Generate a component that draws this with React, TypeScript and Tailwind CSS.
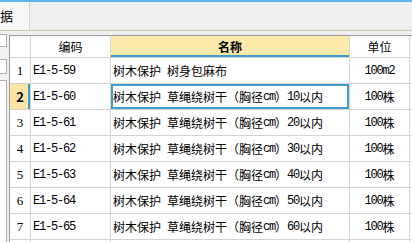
import React from "react";

const rows = [
  { no: 1, code: "E1-5-59", name: "树木保护 树身包麻布", unit: "100m2" },
  { no: 2, code: "E1-5-60", name: "树木保护 草绳绕树干（胸径cm）10以内", unit: "100株" },
  { no: 3, code: "E1-5-61", name: "树木保护 草绳绕树干（胸径cm）20以内", unit: "100株" },
  { no: 4, code: "E1-5-62", name: "树木保护 草绳绕树干（胸径cm）30以内", unit: "100株" },
  { no: 5, code: "E1-5-63", name: "树木保护 草绳绕树干（胸径cm）40以内", unit: "100株" },
  { no: 6, code: "E1-5-64", name: "树木保护 草绳绕树干（胸径cm）50以内", unit: "100株" },
  { no: 7, code: "E1-5-65", name: "树木保护 草绳绕树干（胸径cm）60以内", unit: "100株" },
];

// latin runs get a narrow mono face, like the old bitmap song font
const Mixed = ({ text }: { text: string }) => (
  <>
    {text
      .split(/([\x20-\x7e]+)/)
      .filter(Boolean)
      .map((part, i) =>
        /^[\x20-\x7e]+$/.test(part) ? (
          <span key={i} className="font-['Liberation_Mono'] text-[12px] tracking-[-1.2px] whitespace-pre">
            {part}
          </span>
        ) : (
          <span key={i}>{part}</span>
        )
      )}
  </>
);

export default function App() {
  return (
    <div className="w-[412px] h-[242px] overflow-hidden bg-[#f0f0f0] text-black text-[12px] font-['Noto_Sans_CJK_SC',sans-serif] flex flex-col">
      {/* top accent */}
      <div className="h-[2px] bg-[#5fb6e2]" />

      {/* tab strip */}
      <div className="h-[28px] flex">
        <div className="w-[30px] bg-[#f8f8f8] border-r border-[#d2d2d2] flex items-center justify-end pr-[16px] overflow-hidden">
          <span className="text-[13px] whitespace-nowrap shrink-0">数据</span>
        </div>
        <div className="flex-1 bg-[#efefef]" />
      </div>
      <div className="h-px bg-[#b8cca6]" />

      {/* body */}
      <div className="flex-1 flex min-h-0">
        {/* clipped side widgets */}
        <div className="w-[9px] flex flex-col">
          <div className="mt-[3px] w-[7px] h-[13px] bg-white border border-l-0 border-[#adadad]" />
          <div className="mt-[12px] w-[7px] h-[15px] bg-white border border-l-0 border-[#adadad]" />
          <div className="mt-[6px] w-[7px] flex-1 bg-white border border-l-0 border-b-0 border-[#adadad]" />
        </div>

        {/* grid */}
        <div className="mt-[4px] flex-1 bg-white border-l border-t border-[#9a9a9a] overflow-hidden">
          <div className="flex h-[22px] border-b border-[#d4d4d4]">
            <div className="w-[21px] border-r border-[#d4d4d4]" />
            <div className="w-[80px] border-r border-[#d4d4d4] flex items-center justify-center">编码</div>
            <div className="w-[239px] border-r border-[#d4d4d4] bg-[#fde9a9] shadow-[inset_0_-2px_0_#3d9cc9] flex items-center justify-center font-bold">
              名称
            </div>
            <div className="w-[60px] border-r border-[#d4d4d4] flex items-center justify-center">单位</div>
            <div className="flex-1" />
          </div>

          {rows.map((r) => {
            const sel = r.no === 2;
            return (
              <div key={r.no} className="flex h-[26px] border-b border-[#d4d4d4]">
                <div
                  className={
                    sel
                      ? "w-[21px] border-r border-[#d4d4d4] bg-[#fde5a6] shadow-[inset_-2px_0_0_#3d9cc9] flex items-center justify-center font-bold text-[13px]"
                      : "w-[21px] border-r border-[#d4d4d4] flex items-center justify-center font-['Liberation_Serif'] text-[13px]"
                  }
                >
                  {r.no}
                </div>
                <div className="w-[80px] border-r border-[#d4d4d4] flex items-center pl-[2px] font-['Liberation_Mono'] text-[12px] tracking-[-1.2px]">
                  {r.code}
                </div>
                <div
                  className={
                    sel
                      ? "w-[239px] border-r border-[#d4d4d4] shadow-[inset_0_0_0_2px_#3d9cc9] flex items-center pl-[2px] whitespace-nowrap overflow-hidden"
                      : "w-[239px] border-r border-[#d4d4d4] flex items-center pl-[2px] whitespace-nowrap overflow-hidden"
                  }
                >
                  <Mixed text={r.name} />
                </div>
                <div className="w-[60px] border-r border-[#d4d4d4] flex items-center justify-center">
                  <Mixed text={r.unit} />
                </div>
                <div className="flex-1" />
              </div>
            );
          })}

          {/* next row, only its top edge shows */}
          <div className="flex h-[26px]">
            <div className="w-[21px] border-r border-[#d4d4d4]" />
            <div className="w-[80px] border-r border-[#d4d4d4]" />
            <div className="w-[239px] border-r border-[#d4d4d4]" />
            <div className="w-[60px] border-r border-[#d4d4d4]" />
            <div className="flex-1" />
          </div>
        </div>
      </div>
    </div>
  );
}
